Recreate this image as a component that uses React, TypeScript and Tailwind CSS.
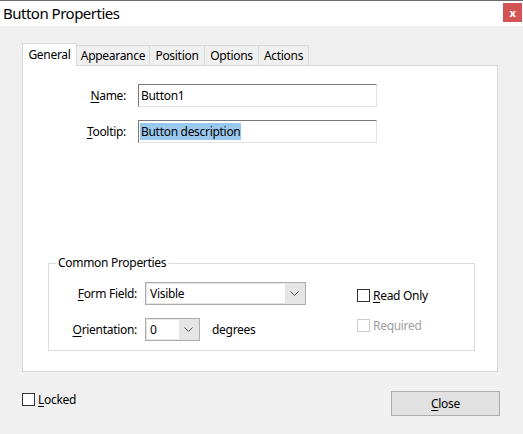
const Ul = ({ k, rest }: { k: string; rest: string }) => (
  <>
    <span className="underline underline-offset-2">{k}</span>
    {rest}
  </>
);

const TextInput = ({ value, selected }: { value: string; selected?: boolean }) => (
  <div className="h-[23px] w-[239px] bg-white border border-t-[#7a7a7a] border-l-[#7a7a7a] border-r-[#e3e3e3] border-b-[#e3e3e3] flex items-center pl-[1px]">
    <span className={selected ? 'bg-[#99c9ef] leading-[17px] px-px' : 'px-px'}>{value}</span>
  </div>
);

const Select = ({ value, width }: { value: string; width: string }) => (
  <div className={`h-[23px] ${width} bg-[#e5e5e5] border border-[#acacac] flex items-stretch p-px`}>
    <div className="flex-1 bg-white flex items-center pl-[3px]">{value}</div>
    <div className="w-[19px] flex items-center justify-center">
      <svg width="9" height="5" viewBox="0 0 9 5" fill="none">
        <polyline points="0.5,0.5 4.5,4.5 8.5,0.5" stroke="#4d4d4d" strokeWidth="1" />
      </svg>
    </div>
  </div>
);

const Checkbox = ({ disabled }: { disabled?: boolean }) => (
  <div
    className={`w-[13px] h-[13px] bg-white border ${disabled ? 'border-[#cccccc]' : 'border-[#333333]'}`}
  />
);

const tabs = [
  { name: 'Appearance', w: 'w-[73px]' },
  { name: 'Position', w: 'w-[55px]' },
  { name: 'Options', w: 'w-[54px]' },
  { name: 'Actions', w: 'w-[50px]' },
];

export default function App() {
  return (
    <div
      className="w-[523px] h-[434px] bg-[#f0f0f0] text-[12px] tracking-[-0.3px] text-black overflow-hidden"
      style={{ fontFamily: "'Segoe UI', 'Noto Sans', sans-serif" }}
    >
      {/* title bar */}
      <div className="h-[26px] bg-white border-t border-[#6b6b6b] flex items-start justify-between">
        <span className="pl-[3px] pt-[2px] text-[15px] leading-[20px] tracking-[-0.5px]">Button Properties</span>
        <div className="mt-[2px] mr-px w-[19px] h-[19px] bg-[#d35454] flex items-center justify-center text-white text-[11px] font-bold leading-none">
          x
        </div>
      </div>

      <div className="px-[22px] pt-[17px]">
        {/* tabs */}
        <div className="flex items-end h-[22px] relative z-10">
          <div className="h-[23px] w-[55px] -mb-px bg-white border border-b-0 border-[#d9d9d9] flex items-start justify-center pt-[2px]">
            General
          </div>
          {tabs.map((t) => (
            <div
              key={t.name}
              className={`h-[20px] ${t.w} border-t border-r border-[#d9d9d9] flex items-center justify-center`}
            >
              {t.name}
            </div>
          ))}
        </div>

        {/* panel */}
        <div className="h-[307px] w-[476px] bg-white border border-[#d9d9d9] pt-[18px]">
          <div className="flex items-center">
            <div className="w-[103px] text-right">
              <Ul k="N" rest="ame:" />
            </div>
            <div className="ml-[12px]">
              <TextInput value="Button1" />
            </div>
          </div>
          <div className="flex items-center mt-[13px]">
            <div className="w-[103px] text-right">
              <Ul k="T" rest="ooltip:" />
            </div>
            <div className="ml-[12px]">
              <TextInput value="Button description" selected />
            </div>
          </div>

          {/* common properties group */}
          <fieldset className="ml-[25px] mt-[112px] w-[427px] border border-[#dcdcdc] pb-[9px]">
            <legend className="ml-[7px] px-[2px] leading-[16px]">Common Properties</legend>
            <div className="flex pt-[11px]">
              <div className="w-[257px] flex flex-col gap-[13px]">
                <div className="flex items-center">
                  <div className="w-[88px] text-right">
                    <Ul k="F" rest="orm Field:" />
                  </div>
                  <div className="ml-[8px]">
                    <Select value="Visible" width="w-[161px]" />
                  </div>
                </div>
                <div className="flex items-center">
                  <div className="w-[88px] text-right">
                    <Ul k="O" rest="rientation:" />
                  </div>
                  <div className="ml-[8px]">
                    <Select value="0" width="w-[55px]" />
                  </div>
                  <span className="ml-[12px]">degrees</span>
                </div>
              </div>
              <div className="ml-[51px] pt-[5px] flex flex-col gap-[13px]">
                <div className="flex items-center gap-[3px] h-[17px]">
                  <Checkbox />
                  <span>
                    <Ul k="R" rest="ead Only" />
                  </span>
                </div>
                <div className="flex items-center gap-[3px] h-[17px] text-[#a0a0a0]">
                  <Checkbox disabled />
                  <span>Required</span>
                </div>
              </div>
            </div>
          </fieldset>
        </div>

        {/* footer */}
        <div className="flex items-start justify-between mt-[19px] pr-[1px]">
          <div className="flex items-center gap-[3px] h-[15px] mt-px">
            <Checkbox />
            <span>
              <Ul k="L" rest="ocked" />
            </span>
          </div>
          <div className="w-[109px] h-[25px] bg-[#e1e1e1] border border-[#adadad] flex items-center justify-center">
            <Ul k="C" rest="lose" />
          </div>
        </div>
      </div>
    </div>
  );
}
